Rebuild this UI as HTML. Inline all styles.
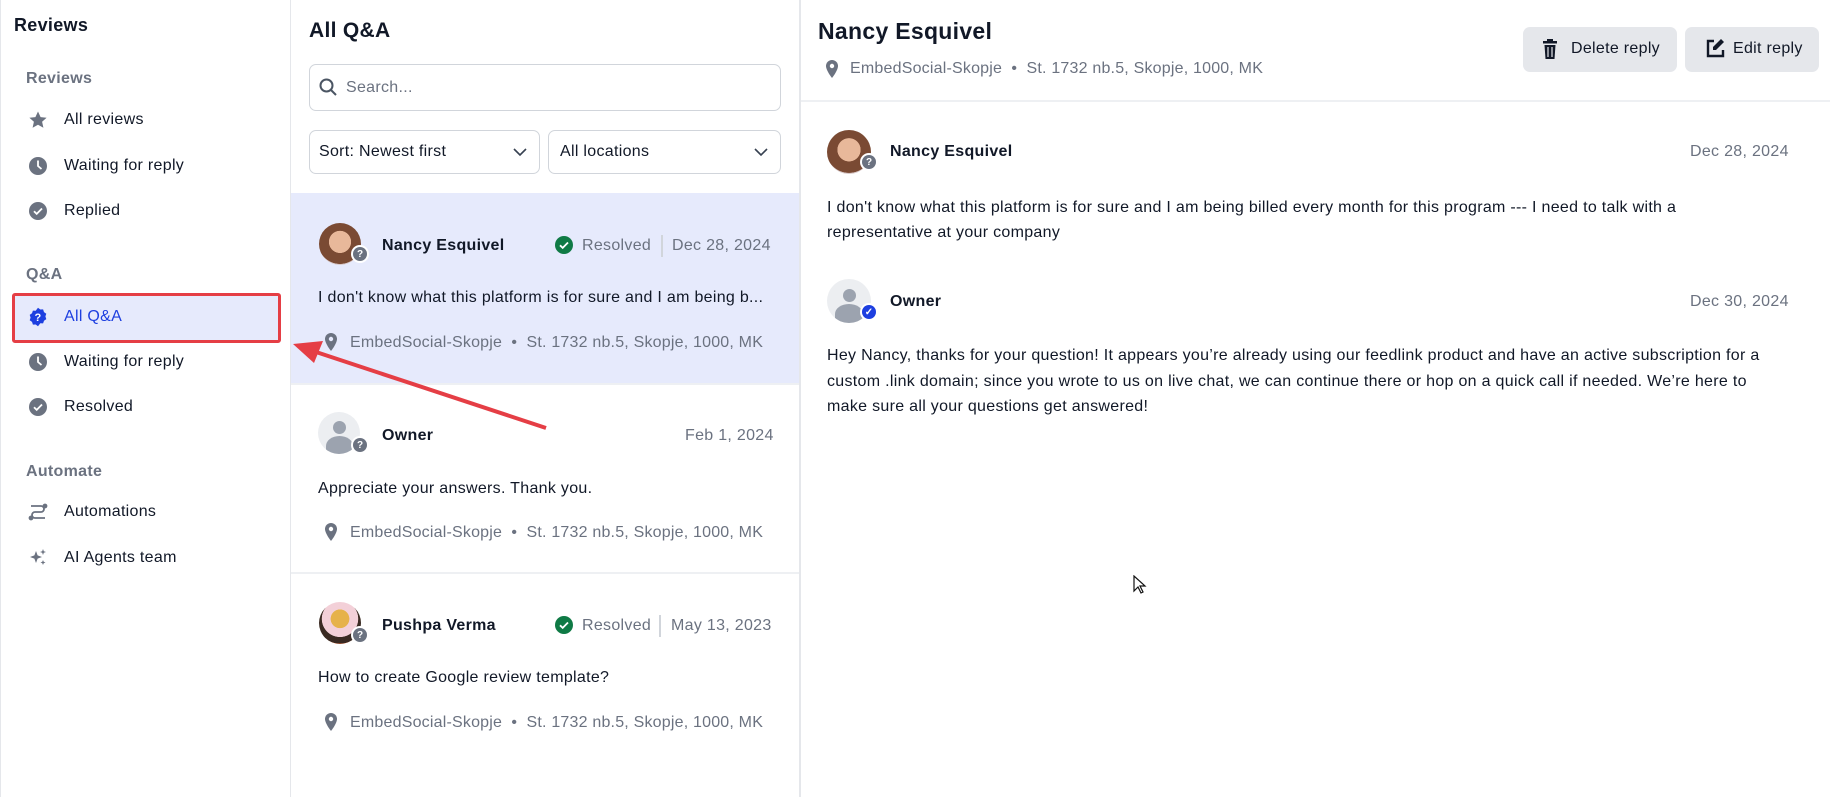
<!DOCTYPE html>
<html><head><meta charset="utf-8"><style>
*{box-sizing:border-box;margin:0;padding:0}
body{width:1830px;height:797px;overflow:hidden;background:#fff;font-family:"Liberation Sans",Arial,sans-serif;color:#111827;position:relative;font-size:16px;letter-spacing:0.3px}
.a{position:absolute;white-space:nowrap}
.g{color:#6b7280}
.b{font-weight:bold}
.nav{position:absolute;left:28px;width:20px;height:20px}
.navt{position:absolute;left:64px;font-size:16px;color:#111827}
.sec{position:absolute;left:26px;font-size:16px;font-weight:bold;color:#6b7280}
.av{position:absolute;width:42px;height:42px;border-radius:50%}
.badge{position:absolute;width:18px;height:18px;border-radius:50%;background:#fff;display:flex;align-items:center;justify-content:center;letter-spacing:0}
.badge i{width:14px;height:14px;border-radius:50%;background:#6b7280;color:#fff;font-size:10px;font-style:normal;font-weight:bold;display:flex;align-items:center;justify-content:center}
.loc{position:absolute;font-size:16px;color:#6b7280;white-space:nowrap;letter-spacing:0.2px}
</style></head><body>
<div class="a" style="left:0;top:0;width:1px;height:797px;background:#e5e7eb"></div>
<div class="a" style="left:290px;top:0;width:1px;height:797px;background:#e5e7eb"></div>
<div class="a" style="left:799px;top:0;width:2px;height:797px;background:#e5e7eb"></div>

<!-- sidebar -->
<div class="a b" style="left:14px;top:15px;font-size:18px">Reviews</div>
<div class="sec" style="top:70px">Reviews</div>
<svg class="nav" style="top:110px" viewBox="0 0 20 20"><path d="M10 1.5l2.6 5.6 6 .6-4.5 4.1 1.3 6L10 14.8 4.6 17.8l1.3-6L1.4 7.7l6-.6z" fill="#6b7280"/></svg>
<div class="navt" style="top:111px">All reviews</div>
<svg class="nav" style="top:156px" viewBox="0 0 20 20"><circle cx="10" cy="10" r="9" fill="#6b7280"/><path d="M10 4.5V10l3.5 3" stroke="#fff" stroke-width="1.8" fill="none"/></svg>
<div class="navt" style="top:157px">Waiting for reply</div>
<svg class="nav" style="top:201px" viewBox="0 0 20 20"><circle cx="10" cy="10" r="9" fill="#6b7280"/><path d="M6 10.2l2.7 2.7L14 7.5" stroke="#fff" stroke-width="1.8" fill="none"/></svg>
<div class="navt" style="top:202px">Replied</div>
<div class="sec" style="top:266px">Q&amp;A</div>
<div class="a" style="left:12px;top:293px;width:269px;height:50px;border:3px solid #e53e45;border-radius:3px;background:#e6eafc"></div>
<svg class="nav" style="top:307px" viewBox="0 0 20 20"><path d="M10 .8l2.3 1.7 2.8-.1.9 2.7 2.3 1.6-.9 2.7.9 2.7-2.3 1.6-.9 2.7-2.8-.1L10 19.2l-2.3-1.7-2.8.1-.9-2.7-2.3-1.6.9-2.7-.9-2.7 2.3-1.6.9-2.7 2.8.1z" fill="#1d3fe0"/><text x="10" y="14" font-size="11" font-weight="bold" fill="#fff" text-anchor="middle" font-family="Liberation Sans">?</text></svg>
<div class="navt" style="top:308px;color:#1d3fe0">All Q&amp;A</div>
<svg class="nav" style="top:352px" viewBox="0 0 20 20"><circle cx="10" cy="10" r="9" fill="#6b7280"/><path d="M10 4.5V10l3.5 3" stroke="#fff" stroke-width="1.8" fill="none"/></svg>
<div class="navt" style="top:353px">Waiting for reply</div>
<svg class="nav" style="top:397px" viewBox="0 0 20 20"><circle cx="10" cy="10" r="9" fill="#6b7280"/><path d="M6 10.2l2.7 2.7L14 7.5" stroke="#fff" stroke-width="1.8" fill="none"/></svg>
<div class="navt" style="top:398px">Resolved</div>
<div class="sec" style="top:463px">Automate</div>
<svg class="nav" style="top:502px" viewBox="0 0 20 20" fill="none" stroke="#6b7280" stroke-width="1.8"><path d="M3 4h10a3 3 0 010 6H7a3 3 0 000 6h10"/><circle cx="17" cy="4" r="1.5" fill="#6b7280"/><circle cx="3" cy="16" r="1.5" fill="#6b7280"/></svg>
<div class="navt" style="top:503px">Automations</div>
<svg class="nav" style="top:548px" viewBox="0 0 20 20" fill="#6b7280"><path d="M8 3l1.6 4.4L14 9l-4.4 1.6L8 15l-1.6-4.4L2 9l4.4-1.6z"/><path d="M15 1l.8 2.2L18 4l-2.2.8L15 7l-.8-2.2L12 4l2.2-.8z"/><path d="M15 12l.7 1.8 1.8.7-1.8.7L15 17l-.7-1.8-1.8-.7 1.8-.7z"/></svg>
<div class="navt" style="top:549px">AI Agents team</div>

<!-- middle -->
<div class="a b" style="left:309px;top:19px;font-size:21px">All Q&amp;A</div>
<div class="a" style="left:309px;top:64px;width:472px;height:47px;border:1px solid #d1d5db;border-radius:7px"></div>
<svg class="a" style="left:318px;top:77px" width="20" height="20" viewBox="0 0 20 20" fill="none" stroke="#4b5563" stroke-width="2"><circle cx="8.5" cy="8.5" r="6"/><path d="M13 13l5 5"/></svg>
<div class="a g" style="left:346px;top:79px">Search...</div>
<div class="a" style="left:309px;top:130px;width:231px;height:44px;border:1px solid #d1d5db;border-radius:7px"></div>
<div class="a" style="left:319px;top:143px">Sort: Newest first</div>
<svg class="a" style="left:512px;top:145px" width="16" height="14" viewBox="0 0 16 14" fill="none" stroke="#374151" stroke-width="1.6"><path d="M2 4l6 6 6-6"/></svg>
<div class="a" style="left:548px;top:130px;width:233px;height:44px;border:1px solid #d1d5db;border-radius:7px"></div>
<div class="a" style="left:560px;top:143px">All locations</div>
<svg class="a" style="left:753px;top:145px" width="16" height="14" viewBox="0 0 16 14" fill="none" stroke="#374151" stroke-width="1.6"><path d="M2 4l6 6 6-6"/></svg>

<!-- card 1 -->
<div class="a" style="left:291px;top:193px;width:508px;height:190px;background:#e6eafc"></div>
<div class="av" style="left:319px;top:223px;background:radial-gradient(circle at 50% 45%,#e8b89a 0 35%,#7a4a33 36% 70%,#d8c8c8 71%)"></div>
<div class="badge" style="left:351px;top:245px"><i>?</i></div>
<div class="a b" style="left:382px;top:237px">Nancy Esquivel</div>
<svg class="a" style="left:555px;top:236px" width="18" height="18" viewBox="0 0 18 18"><circle cx="9" cy="9" r="9" fill="#0f7a45"/><path d="M5 9.3l2.7 2.6L13 6.5" stroke="#fff" stroke-width="1.8" fill="none"/></svg>
<div class="a g" style="left:582px;top:237px">Resolved</div>
<div class="a" style="left:661px;top:235px;width:2px;height:22px;background:#d1d5db"></div>
<div class="a g" style="left:672px;top:237px">Dec 28, 2024</div>
<div class="a" style="left:318px;top:289px">I don't know what this platform is for sure and I am being b...</div>
<svg class="a" style="left:323px;top:332px" width="16" height="20" viewBox="0 0 16 20"><path d="M8 1a6 6 0 00-6 6c0 4.5 6 12 6 12s6-7.5 6-12a6 6 0 00-6-6z" fill="#6b7280"/><circle cx="8" cy="7" r="2.2" fill="#e6eafc"/></svg>
<div class="loc" style="left:350px;top:334px">EmbedSocial-Skopje &nbsp;•&nbsp; St. 1732 nb.5, Skopje, 1000, MK</div>
<div class="a" style="left:291px;top:383px;width:508px;height:2px;background:#eef0f3"></div>

<!-- card 2 -->
<div class="av" style="left:318px;top:412px;background:#eceef1;overflow:hidden"><div class="a" style="left:15px;top:9px;width:13px;height:13px;border-radius:50%;background:#9ca3af"></div><div class="a" style="left:8px;top:24px;width:27px;height:20px;border-radius:50% 50% 0 0;background:#9ca3af"></div></div>
<div class="badge" style="left:351px;top:436px"><i>?</i></div>
<div class="a b" style="left:382px;top:427px">Owner</div>
<div class="a g" style="left:685px;top:427px">Feb 1, 2024</div>
<div class="a" style="left:318px;top:480px">Appreciate your answers. Thank you.</div>
<svg class="a" style="left:323px;top:522px" width="16" height="20" viewBox="0 0 16 20"><path d="M8 1a6 6 0 00-6 6c0 4.5 6 12 6 12s6-7.5 6-12a6 6 0 00-6-6z" fill="#6b7280"/><circle cx="8" cy="7" r="2.2" fill="#fff"/></svg>
<div class="loc" style="left:350px;top:524px">EmbedSocial-Skopje &nbsp;•&nbsp; St. 1732 nb.5, Skopje, 1000, MK</div>
<div class="a" style="left:291px;top:572px;width:508px;height:2px;background:#eef0f3"></div>

<!-- card 3 -->
<div class="av" style="left:319px;top:602px;background:radial-gradient(circle at 50% 40%,#e6b24a 0 28%,#f3d0d8 29% 55%,#3a2a22 56% 75%,#e85a20 76%)"></div>
<div class="badge" style="left:351px;top:626px"><i>?</i></div>
<div class="a b" style="left:382px;top:617px">Pushpa Verma</div>
<svg class="a" style="left:555px;top:616px" width="18" height="18" viewBox="0 0 18 18"><circle cx="9" cy="9" r="9" fill="#0f7a45"/><path d="M5 9.3l2.7 2.6L13 6.5" stroke="#fff" stroke-width="1.8" fill="none"/></svg>
<div class="a g" style="left:582px;top:617px">Resolved</div>
<div class="a" style="left:659px;top:615px;width:2px;height:22px;background:#d1d5db"></div>
<div class="a g" style="left:671px;top:617px">May 13, 2023</div>
<div class="a" style="left:318px;top:669px">How to create Google review template?</div>
<svg class="a" style="left:323px;top:712px" width="16" height="20" viewBox="0 0 16 20"><path d="M8 1a6 6 0 00-6 6c0 4.5 6 12 6 12s6-7.5 6-12a6 6 0 00-6-6z" fill="#6b7280"/><circle cx="8" cy="7" r="2.2" fill="#fff"/></svg>
<div class="loc" style="left:350px;top:714px">EmbedSocial-Skopje &nbsp;•&nbsp; St. 1732 nb.5, Skopje, 1000, MK</div>

<!-- arrow -->
<svg class="a" style="left:0;top:0" width="800" height="797"><line x1="546" y1="428" x2="310" y2="350" stroke="#e53e45" stroke-width="4"/><path d="M293 344l30-3-9 22z" fill="#e53e45"/></svg>

<!-- right -->
<div class="a b" style="left:818px;top:18px;font-size:23px">Nancy Esquivel</div>
<svg class="a" style="left:824px;top:59px" width="16" height="20" viewBox="0 0 16 20"><path d="M8 1a6 6 0 00-6 6c0 4.5 6 12 6 12s6-7.5 6-12a6 6 0 00-6-6z" fill="#6b7280"/><circle cx="8" cy="7" r="2.2" fill="#fff"/></svg>
<div class="loc" style="left:850px;top:60px">EmbedSocial-Skopje &nbsp;•&nbsp; St. 1732 nb.5, Skopje, 1000, MK</div>
<div class="a" style="left:1523px;top:27px;width:154px;height:45px;border-radius:7px;background:#e5e7eb"></div>
<svg class="a" style="left:1542px;top:38px" width="16" height="22" viewBox="0 0 16 22" fill="#111827"><rect x="1" y="3" width="14" height="2.5"/><rect x="5" y="1" width="6" height="2"/><path d="M2.5 7h11l-1 14h-9z"/><path d="M6 9v10M10 9v10" stroke="#e5e7eb" stroke-width="1.2"/></svg>
<div class="a" style="left:1571px;top:40px">Delete reply</div>
<div class="a" style="left:1685px;top:27px;width:134px;height:45px;border-radius:7px;background:#e5e7eb"></div>
<svg class="a" style="left:1705px;top:38px" width="20" height="20" viewBox="0 0 20 20"><path d="M9 3H3v15h15v-6" stroke="#111827" stroke-width="2.4" fill="none"/><path d="M16 1l3 3-8 8H8V9z" fill="#111827"/></svg>
<div class="a" style="left:1733px;top:40px">Edit reply</div>
<div class="a" style="left:801px;top:100px;width:1029px;height:2px;background:#eef0f3"></div>

<div class="av" style="left:827px;top:130px;width:44px;height:44px;background:radial-gradient(circle at 50% 45%,#e8b89a 0 35%,#7a4a33 36% 70%,#d8c8c8 71%)"></div>
<div class="badge" style="left:860px;top:153px"><i>?</i></div>
<div class="a b" style="left:890px;top:143px">Nancy Esquivel</div>
<div class="a g" style="left:1690px;top:143px">Dec 28, 2024</div>
<div class="a" style="left:827px;top:195px;line-height:25px">I don't know what this platform is for sure and I am being billed every month for this program --- I need to talk with a<br>representative at your company</div>

<div class="av" style="left:827px;top:279px;width:44px;height:44px;background:#eceef1;overflow:hidden"><div class="a" style="left:16px;top:10px;width:13px;height:13px;border-radius:50%;background:#9ca3af"></div><div class="a" style="left:8px;top:25px;width:28px;height:20px;border-radius:50% 50% 0 0;background:#9ca3af"></div></div>
<div class="badge" style="left:860px;top:303px"><i style="background:#1d3fe0">✓</i></div>
<div class="a b" style="left:890px;top:293px">Owner</div>
<div class="a g" style="left:1690px;top:293px">Dec 30, 2024</div>
<div class="a" style="left:827px;top:343px;line-height:25.5px">Hey Nancy, thanks for your question! It appears you’re already using our feedlink product and have an active subscription for a<br>custom .link domain; since you wrote to us on live chat, we can continue there or hop on a quick call if needed. We’re here to<br>make sure all your questions get answered!</div>

<svg class="a" style="left:1133px;top:575px" width="14" height="20" viewBox="0 0 14 20"><path d="M1 1v15l4-4 3 6 2-1-3-6h5z" fill="#fff" stroke="#111" stroke-width="1.2"/></svg>
</body></html>
